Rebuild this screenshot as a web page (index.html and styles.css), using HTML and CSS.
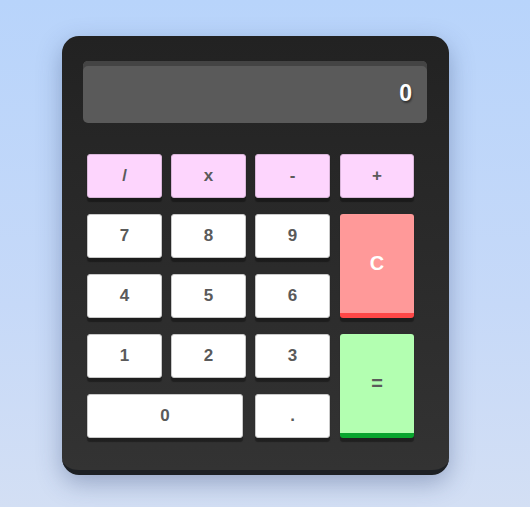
FILE: index.html
```html
<!DOCTYPE html>
<html lang="en">
<head>
<meta charset="utf-8">
<title>Calculator</title>
<link rel="stylesheet" href="styles.css">
</head>
<body>
<div class="calculator">
  <div class="display">0</div>
  <div class="keys">
    <button class="key op">/</button>
    <button class="key op">x</button>
    <button class="key op">-</button>
    <button class="key op">+</button>
    <button class="key">7</button>
    <button class="key">8</button>
    <button class="key">9</button>
    <button class="key clear">C</button>
    <button class="key">4</button>
    <button class="key">5</button>
    <button class="key">6</button>
    <button class="key">1</button>
    <button class="key">2</button>
    <button class="key">3</button>
    <button class="key equals">=</button>
    <button class="key zero">0</button>
    <button class="key">.</button>
  </div>
</div>
</body>
</html>
```
FILE: styles.css
```css
html, body {
  margin: 0;
  height: 100%;
}

body {
  background: linear-gradient(to bottom, #b8d4fb 0%, #c6d9f8 60%, #d3dff4 100%);
  font-family: "Liberation Sans", Arial, sans-serif;
  overflow: hidden;
}

.calculator {
  box-sizing: border-box;
  width: 387px;
  margin: 36px 0 0 62px;
  padding: 25px 22px 32px 21px;
  border-radius: 17px;
  background: linear-gradient(to bottom, #222 0%, #2c2c2c 60%, #333 100%);
  border-bottom: 5px solid #1d2024;
  box-shadow: 0 8px 24px rgba(40, 60, 110, 0.35);
}

.display {
  box-sizing: border-box;
  height: 62px;
  width: 344px;
  padding: 2px 15px 0;
  border-radius: 5px;
  background: #5a5a5a;
  box-shadow: inset 0 5px 0 #444;
  color: #fff;
  font-size: 23px;
  font-weight: bold;
  text-align: right;
  line-height: 60px;
  text-shadow: 1px 2px 2px rgba(0, 0, 0, 0.45);
}

.keys {
  display: grid;
  grid-template-columns: 75px 75px 75px 75px;
  grid-auto-rows: 44px;
  column-gap: 9px;
  row-gap: 16px;
  margin: 31px 0 0 4px;
}

.key {
  box-sizing: border-box;
  border: 1px solid #c9c9c9;
  border-radius: 3px;
  background: #fff;
  color: #5a5a5a;
  font-family: "Liberation Sans", Arial, sans-serif;
  font-size: 17px;
  font-weight: bold;
  padding: 0;
  box-shadow: 0 4px 1px rgba(0, 0, 0, 0.35);
}

.op {
  background: #fdd5fd;
  border-color: #d9b6d9;
}

.op:nth-child(4) {
  margin-left: 1px;
}

.clear {
  grid-column: 4;
  grid-row: 2 / span 2;
  margin-left: 1px;
  background: #ff9999;
  border: none;
  border-bottom: 5px solid #ff4747;
  color: #fff;
  font-size: 20px;
}

.equals {
  grid-column: 4;
  grid-row: 4 / span 2;
  margin-left: 1px;
  background: #b3ffb1;
  border: none;
  border-bottom: 5px solid #09a52e;
  font-size: 20px;
}

.zero {
  grid-column: 1 / span 2;
  margin-right: 3px;
}
```
